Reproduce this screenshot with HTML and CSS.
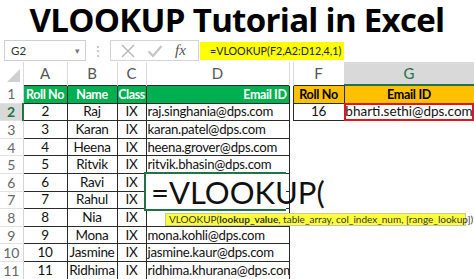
FILE: index.html
```html
<!DOCTYPE html>
<html lang="en">
<head>
    <meta charset="UTF-8">
    <meta name="viewport" content="width=device-width, initial-scale=1.0">
    <title>VLOOKUP Tutorial in Excel</title>
    <link rel="stylesheet" href="styles.css">
</head>
<body>
    <h1 class="title">VLOOKUP Tutorial in Excel</h1>

    <div class="formula-bar">
        <div class="name-box">
            <span>G2</span>
            <span class="arrow">&#9662;</span>
        </div>
        <div class="dots">&#8942;</div>
        <div class="tools">
            <svg width="16" height="16" viewBox="0 0 16 16">
                <path d="M2 2 L14 14 M14 2 L2 14" stroke="#b4b4b4" stroke-width="1.4" fill="none"/>
            </svg>
            <svg width="16" height="16" viewBox="0 0 16 16">
                <path d="M1.5 8.5 L6 13 L14.5 3" stroke="#c4c4c4" stroke-width="2.2" fill="none"/>
            </svg>
            <span class="fx">fx</span>
        </div>
        <div class="formula">
            <span class="formula-text">=VLOOKUP(F2,A2:D12,4,1)</span>
        </div>
    </div>

    <div class="sheet">
        <table class="grid">
            <colgroup>
                <col class="w-head">
                <col class="w-a">
                <col class="w-b">
                <col class="w-c">
                <col class="w-d">
                <col class="w-e">
                <col class="w-f">
                <col class="w-g">
            </colgroup>
            <thead>
                <tr>
                    <th class="corner"><span class="tri"></span></th>
                    <th>A</th>
                    <th>B</th>
                    <th>C</th>
                    <th>D</th>
                    <th></th>
                    <th>F</th>
                    <th class="active">G</th>
                </tr>
            </thead>
            <tbody>
                <tr>
                    <td class="rn">1</td>
                    <td class="cell green">Roll No</td>
                    <td class="cell green">Name</td>
                    <td class="cell green">Class</td>
                    <td class="cell green right">Email ID</td>
                    <td></td>
                    <td class="cell orange">Roll No</td>
                    <td class="cell orange">Email ID</td>
                </tr>
                <tr>
                    <td class="rn active">2</td>
                    <td class="cell">2</td>
                    <td class="cell">Raj</td>
                    <td class="cell">IX</td>
                    <td class="cell left">raj.singhania@dps.com</td>
                    <td></td>
                    <td class="cell">16</td>
                    <td class="cell picked">bharti.sethi@dps.com</td>
                </tr>
                <tr>
                    <td class="rn">3</td>
                    <td class="cell">3</td>
                    <td class="cell">Karan</td>
                    <td class="cell">IX</td>
                    <td class="cell left">karan.patel@dps.com</td>
                    <td></td><td></td><td></td>
                </tr>
                <tr>
                    <td class="rn">4</td>
                    <td class="cell">4</td>
                    <td class="cell">Heena</td>
                    <td class="cell">IX</td>
                    <td class="cell left">heena.grover@dps.com</td>
                    <td></td><td></td><td></td>
                </tr>
                <tr>
                    <td class="rn">5</td>
                    <td class="cell">5</td>
                    <td class="cell">Ritvik</td>
                    <td class="cell">IX</td>
                    <td class="cell left">ritvik.bhasin@dps.com</td>
                    <td></td><td></td><td></td>
                </tr>
                <tr>
                    <td class="rn">6</td>
                    <td class="cell">6</td>
                    <td class="cell">Ravi</td>
                    <td class="cell">IX</td>
                    <td class="cell left blank"></td>
                    <td></td><td></td><td></td>
                </tr>
                <tr>
                    <td class="rn">7</td>
                    <td class="cell">7</td>
                    <td class="cell">Rahul</td>
                    <td class="cell">IX</td>
                    <td class="cell left blank"></td>
                    <td></td><td></td><td></td>
                </tr>
                <tr>
                    <td class="rn">8</td>
                    <td class="cell">8</td>
                    <td class="cell">Nia</td>
                    <td class="cell">IX</td>
                    <td class="cell left blank"></td>
                    <td></td><td></td><td></td>
                </tr>
                <tr>
                    <td class="rn">9</td>
                    <td class="cell">9</td>
                    <td class="cell">Mona</td>
                    <td class="cell">IX</td>
                    <td class="cell left">mona.kohli@dps.com</td>
                    <td></td><td></td><td></td>
                </tr>
                <tr>
                    <td class="rn">10</td>
                    <td class="cell">10</td>
                    <td class="cell">Jasmine</td>
                    <td class="cell">IX</td>
                    <td class="cell left">jasmine.kaur@dps.com</td>
                    <td></td><td></td><td></td>
                </tr>
                <tr>
                    <td class="rn">11</td>
                    <td class="cell">11</td>
                    <td class="cell">Ridhima</td>
                    <td class="cell">IX</td>
                    <td class="cell left">ridhima.khurana@dps.com</td>
                    <td></td><td></td><td></td>
                </tr>
                <tr class="last">
                    <td class="rn"></td>
                    <td class="cell"></td>
                    <td class="cell"></td>
                    <td class="cell"></td>
                    <td class="cell"></td>
                    <td></td><td></td><td></td>
                </tr>
            </tbody>
        </table>

        <div class="editor">=VLOOKUP(<span class="caret"></span></div>
        <div class="hint">VLOOKUP(<b>lookup_value</b>, table_array, col_index_num, [range_lookup])</div>
    </div>
</body>
</html>
```

FILE: styles.css
```css
body {
    margin: 0;
    padding: 0;
    width: 474px;
    height: 279px;
    overflow: hidden;
    background: white;
    font-family: Lato, "Open Sans", sans-serif;
}

.title {
    margin: -3px 0 -3px;
    line-height: 45px;
    font-family: "Open Sans", sans-serif;
    font-size: 33px;
    font-weight: 700;
    text-align: center;
    color: #000;
    letter-spacing: -0.7px;
    white-space: nowrap;
}

/* formula bar */
.formula-bar {
    height: 23px;
    display: flex;
    align-items: center;
    font-size: 11.5px;
    color: #333;
}
.name-box {
    width: 82px;
    height: 21px;
    margin-left: 4px;
    border: 1px solid #cfcfcf;
    box-sizing: border-box;
    display: flex;
    align-items: center;
    justify-content: space-between;
    padding: 0 5px 0 6px;
}
.arrow {
    color: #777;
    font-size: 9px;
}
.dots {
    width: 24px;
    text-align: center;
    color: #b8b8b8;
    font-size: 14px;
}
.tools {
    width: 89px;
    height: 21px;
    box-sizing: border-box;
    border: 1px solid #d4d4d4;
    display: flex;
    align-items: center;
    gap: 11px;
    padding-left: 9px;
}
.fx {
    font-family: "Liberation Serif", serif;
    font-style: italic;
    font-size: 15px;
    color: #555;
    margin-left: 1px;
}
.formula {
    flex: 1;
    height: 21px;
    display: flex;
    align-items: center;
    padding-left: 1px;
}
.formula-text {
    background: #ffff00;
    height: 18px;
    line-height: 18px;
    padding: 0 3px 0 10px;
    color: #222;
    font-size: 10.7px;
}

/* sheet */
.sheet {
    position: relative;
}
.grid {
    border-collapse: collapse;
    table-layout: fixed;
    width: 474px;
}
.w-head { width: 23px; }
.w-a { width: 44px; }
.w-b { width: 50px; }
.w-c { width: 29px; }
.w-d { width: 143px; }
.w-e { width: 4px; }
.w-f { width: 51px; }
.w-g { width: 130px; }

.grid th {
    height: 22px;
    padding: 0;
    font-weight: 400;
    font-size: 15px;
    color: #555;
    border-right: 1px solid #dadada;
    text-align: center;
}
.grid th.active {
    background: #d9d9d9;
    color: #217346;
    border-bottom: 2px solid #217346;
}
.corner {
    position: relative;
}
.tri {
    position: absolute;
    right: 3px;
    bottom: 3px;
    width: 0;
    height: 0;
    border-left: 13px solid transparent;
    border-bottom: 13px solid #d0d0d0;
}

.grid td {
    height: 16.6px;
    padding: 0;
    font-size: 13.5px;
    line-height: 15px;
    white-space: nowrap;
    overflow: hidden;
    text-align: center;
    color: #111;
}
.grid td.rn {
    font-size: 14px;
    color: #666;
    border-right: 1px solid #d4d4d4;
    border-bottom: 1px solid #e2e2e2;
}
.grid td.rn.active {
    background: #d9d9d9;
    color: #217346;
    font-weight: 700;
    border-right: 2px solid #217346;
}
.grid td.cell {
    border: 1px solid #2a2a2a;
    letter-spacing: -0.3px;
}
.grid td.left {
    text-align: left;
    padding-left: 1px;
    font-size: 13.2px;
    letter-spacing: -0.25px;
}
.grid td.right {
    text-align: right;
    padding-right: 2px;
}
.grid td.green {
    background: #00b050;
    color: #fff;
    font-weight: 700;
    font-size: 12.5px;
    letter-spacing: -0.4px;
}
.grid td.orange {
    background: #ffc000;
    color: #000;
    font-weight: 700;
    font-size: 12.5px;
    letter-spacing: -0.3px;
}
.grid td.picked {
    outline: 2px solid #e3141b;
    outline-offset: -2px;
    letter-spacing: 0;
}
.grid tr.last td.cell {
    border-top: 2px solid #444;
}

/* in-cell editor and argument hint sit over the grid */
.editor {
    position: absolute;
    left: 144px;
    top: 110px;
    width: 142px;
    height: 39px;
    box-sizing: border-box;
    border: 2px solid #217346;
    border-right: none;
    background: #fff;
    font-size: 31px;
    line-height: 34px;
    padding-left: 5px;
    color: #111;
    white-space: nowrap;
    display: flex;
    align-items: center;
}
.caret {
    display: inline-block;
    width: 1px;
    height: 28px;
    background: #111;
    margin-left: 2px;
}
.hint {
    position: absolute;
    left: 165px;
    top: 151px;
    width: 301px;
    height: 13px;
    box-sizing: border-box;
    background: #ffff3c;
    border: 1px solid #c8c8a0;
    font-size: 10px;
    line-height: 11px;
    padding-left: 3px;
    color: #333;
    white-space: nowrap;
}
.hint b {
    font-weight: 700;
}
```
